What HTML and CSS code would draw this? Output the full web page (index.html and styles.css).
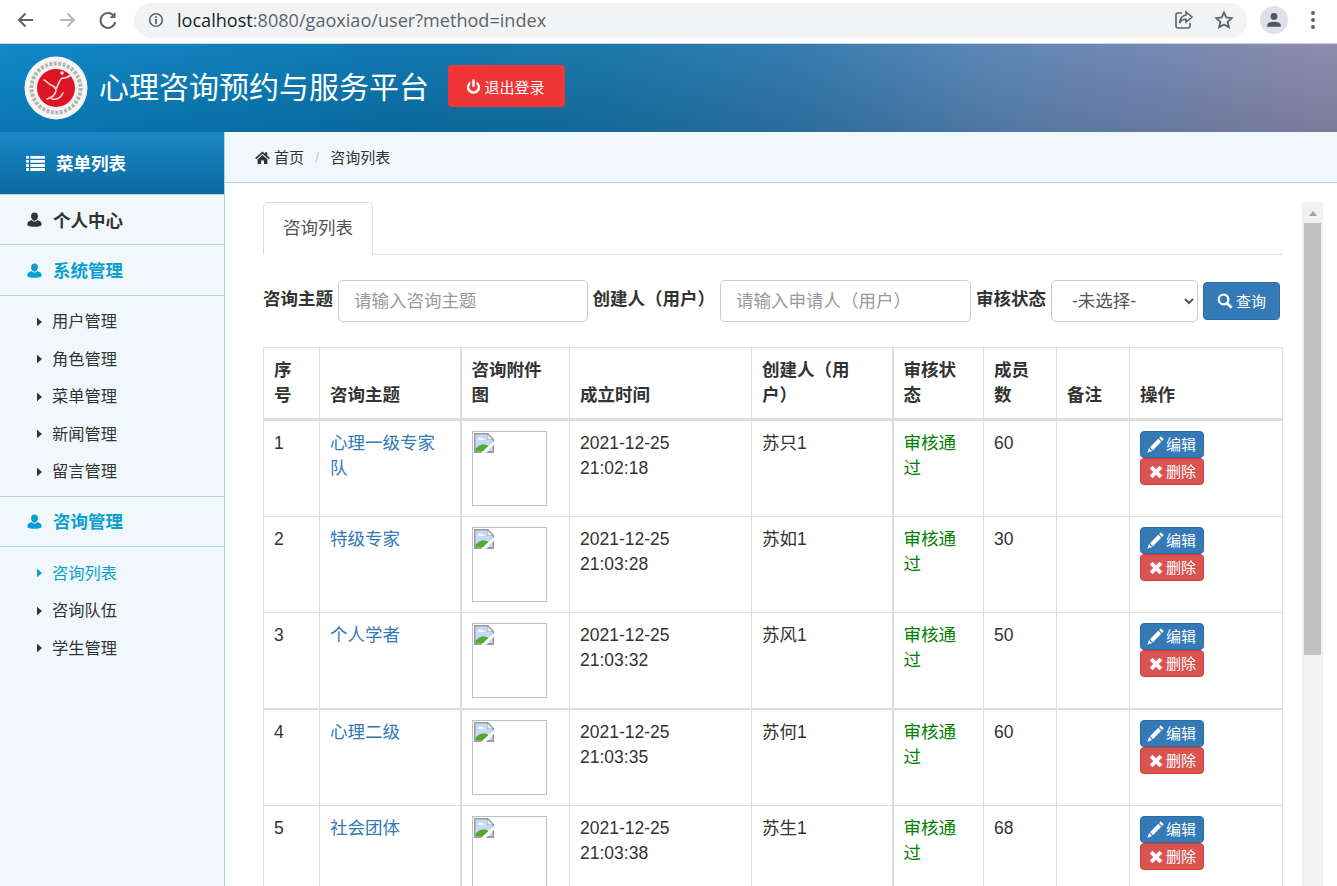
FILE: index.html
```html
<!DOCTYPE html>
<html lang="zh-CN">
<head>
<meta charset="utf-8">
<title>心理咨询预约与服务平台</title>
<link rel="stylesheet" href="styles.css">
</head>
<body>
<svg class="sprite" xmlns="http://www.w3.org/2000/svg">
  <symbol id="i-user" viewBox="0 0 16 16"><path d="M8 .5c2.300 0 3.700 1.600 3.700 3.800 0 2.400-1.500 5-3.700 5S4.300 6.700 4.300 4.300C4.300 2.100 5.700.5 8 .5zM5.200 8.400C5.900 9.400 6.900 10.100 8 10.100s2.100-.7 2.800-1.700l2.500 1.100c1.500.7 2.200 1.600 2.200 3V14c0 .9-3.800 1.600-7.500 1.600S.5 14.900.5 14v-1.500c0-1.400.7-2.300 2.200-3z"/></symbol>
  <symbol id="i-caret" viewBox="1 1 6 10"><path d="M1 1l6 5-6 5z"/></symbol>
  <symbol id="i-list" viewBox="0 0 20 16"><path d="M0 0h3v3H0zM4.500 0H20v3H4.500zM0 4.300h3v3H0zM4.500 4.300H20v3H4.500zM0 8.600h3v3H0zM4.500 8.600H20v3H4.500zM0 12.900h3v3H0zM4.500 12.900H20v3H4.500z"/></symbol>
  <symbol id="i-home" viewBox="0 0 16 16"><path d="M8 1.500l2.800 2.500V2.500h2.200v3.400L15.900 8.500 14.700 9.800 8 3.900 1.300 9.800.1 8.500zM8 5.300l5.200 4.600V15H9.600v-3.800H6.400V15H2.800V9.900z"/></symbol>
  <symbol id="i-power" viewBox="0 0 16 16"><path d="M6.700.5h2.600v8H6.700z"/><path d="M4.800 2.600v2.900a4.400 4.400 0 1 0 6.400 0V2.600a7 7 0 1 1-6.400 0z"/></symbol>
  <symbol id="i-search" viewBox="0 0 16 16"><path d="M6.500.5a6 6 0 0 1 5 9.300l4 4-1.900 1.900-4-4A6 6 0 1 1 6.500.5zm0 2.300a3.700 3.700 0 1 0 0 7.400 3.700 3.700 0 0 0 0-7.400z"/></symbol>
  <symbol id="i-pencil" viewBox="0 0 16 16"><path d="M13 .3l2.700 2.700-1.500 1.600-2.800-2.800zM10.600 2.700l2.800 2.800-7.800 7.800-2.800-2.800zM2 11.200l2.800 2.800-4.500 1.700z"/></symbol>
  <symbol id="i-remove" viewBox="0 0 16 16"><path d="M4 .8L8 4.800l4-4L15.200 4l-4 4 4 4-3.200 3.200-4-4-4 4L.8 12l4-4-4-4z"/></symbol>
  <symbol id="i-broken" viewBox="0 0 20 20">
    <path fill="#9b9b9b" d="M0 0h14l6 6v14H0z"/>
    <path fill="#c5daf6" d="M1.500 1.500h11.500v5.500h5.500v11H1.500z"/>
    <path fill="#f4f8fe" d="M4 6c.5-1.800 3-2 4-1 1.500-.2 2.500.7 2.500 2H4z"/>
    <path fill="#5aa52e" d="M1.500 18v-2c2.500-4 8-6 13-3l-4 5z"/>
    <path fill="#fff" d="M7 20L20 8v3.500L12 20z"/>
    <path fill="#eef0f2" d="M13.500 1.500l5 5h-5z"/>
  </symbol>
</svg>

<div class="browser">
  <svg class="tb-icon" viewBox="0 0 20 20"><path class="st-dark" d="M17 10H3.500M9.500 3.500L3 10l6.500 6.500"/></svg>
  <svg class="tb-icon tb-gap" viewBox="0 0 20 20"><path class="st-light" d="M3 10h13.500M10.500 3.500L17 10l-6.500 6.500"/></svg>
  <svg class="tb-icon tb-gap" viewBox="0 0 20 20"><path class="st-dark" d="M16 6.200A7.400 7.400 0 1 0 17.200 12"/><path class="fl-dark" d="M17.500 2v6h-6z"/></svg>
  <div class="omnibox">
    <svg class="om-info" viewBox="0 0 16 16"><circle class="st-thin" cx="8" cy="8" r="6.300"/><path class="fl-dark" d="M7.100 7h1.800v5H7.100zM7.100 4h1.800v1.800H7.100z"/></svg>
    <span class="url"><span class="url-host">localhost</span>:8080/gaoxiao/user?method=index</span>
    <svg class="om-share" viewBox="0 0 20 20"><path class="st-thin" d="M8 3H4a2 2 0 0 0-2 2v11a2 2 0 0 0 2 2h10a2 2 0 0 0 2-2v-3"/><path class="st-thin" d="M12 2l6 5-6 5V9.200c-3 0-5 1-6.500 3.800C6 9 8 5.700 12 5z"/></svg>
    <svg class="om-star" viewBox="0 0 20 20"><path class="st-star" d="M10 2.500l2.300 5 5.400.6-4 3.700 1.100 5.400-4.800-2.700-4.800 2.700 1.100-5.400-4-3.700 5.400-.6z"/></svg>
  </div>
  <div class="avatar"><svg viewBox="0 0 16 16"><circle cx="8" cy="4.800" r="3"/><path d="M2 14v-1.500C2 10.500 5.500 9.500 8 9.500s6 1 6 3V14z"/></svg></div>
  <div class="dots"><i></i><i></i><i></i></div>
</div>

<header class="topbar">
  <svg class="logo" viewBox="0 0 64 64">
    <circle cx="32" cy="32" r="31.500" fill="#f6f6f6"/>
    <circle cx="32" cy="32" r="24.500" fill="none" stroke="#b4b4b4" stroke-width="4" stroke-dasharray="3 1.500"/>
    <circle cx="32" cy="32" r="21" fill="#f4efef"/>
    <circle cx="32" cy="32" r="19" fill="#dd1426"/>
    <path fill="none" stroke="#f6dcdc" stroke-width="1.600" stroke-linecap="round" d="M20 24c3 1 4 4 7 5 3 1 5 3 5 6-1 4-5 7-9 8M32 33c2-3 2-7 6-11M38 22c3 1 6-1 9-3M28 43c4 1 9-1 11-6"/>
    <circle cx="38" cy="17" r="1.800" fill="#f6dcdc"/>
  </svg>
  <h1 class="site-title">心理咨询预约与服务平台</h1>
  <a class="logout"><svg class="ico ico-md"><use href="#i-power"/></svg><span class="logout-text">退出登录</span></a>
</header>

<div class="body-row">
  <aside class="sidebar">
    <div class="side-head"><svg class="ico-list"><use href="#i-list"/></svg><span class="nudge">菜单列表</span></div>
    <div class="side-group"><svg class="ico ico-lg"><use href="#i-user"/></svg><span class="nudge">个人中心</span></div>
    <div class="side-group side-group-tall is-blue"><svg class="ico ico-lg"><use href="#i-user"/></svg><span class="nudge">系统管理</span></div>
    <ul class="side-sub">
      <li><svg class="caret"><use href="#i-caret"/></svg>用户管理</li>
      <li><svg class="caret"><use href="#i-caret"/></svg>角色管理</li>
      <li><svg class="caret"><use href="#i-caret"/></svg>菜单管理</li>
      <li><svg class="caret"><use href="#i-caret"/></svg>新闻管理</li>
      <li><svg class="caret"><use href="#i-caret"/></svg>留言管理</li>
    </ul>
    <div class="side-group is-blue"><svg class="ico ico-lg"><use href="#i-user"/></svg><span class="nudge">咨询管理</span></div>
    <ul class="side-sub">
      <li class="is-active"><svg class="caret"><use href="#i-caret"/></svg>咨询列表</li>
      <li><svg class="caret"><use href="#i-caret"/></svg>咨询队伍</li>
      <li><svg class="caret"><use href="#i-caret"/></svg>学生管理</li>
    </ul>
  </aside>

  <main class="main">
    <nav class="crumb">
      <svg class="ico ico-sm"><use href="#i-home"/></svg><span>首页</span><span class="crumb-sep">/</span><span>咨询列表</span>
    </nav>
    <div class="content">
      <section class="panel">
        <div class="tabs"><div class="tab">咨询列表</div></div>
        <form class="filters">
          <label class="f-label">咨询主题</label>
          <input class="f-input f-w1" placeholder="请输入咨询主题">
          <label class="f-label">创建人（用户）</label>
          <input class="f-input f-w2" placeholder="请输入申请人（用户）">
          <label class="f-label">审核状态</label>
          <select class="f-select"><option>-未选择-</option></select>
          <button type="button" class="btn-search"><svg class="ico ico-search"><use href="#i-search"/></svg>查询</button>
        </form>
        <table class="grid">
          <colgroup>
            <col class="c1"><col class="c2"><col class="c3"><col class="c4"><col class="c5"><col class="c6"><col class="c7"><col class="c8"><col class="c9">
          </colgroup>
          <thead>
            <tr>
              <th>序<br>号</th><th class="thick-r">咨询主题</th><th>咨询附件<br>图</th><th>成立时间</th><th class="thick-r">创建人（用<br>户）</th><th>审核状<br>态</th><th>成员<br>数</th><th>备注</th><th>操作</th>
            </tr>
          </thead>
          <tbody>
            <tr>
              <td>1</td><td class="thick-r"><a class="link">心理一级专家<br>队</a></td><td><div class="broken"><svg class="broken-ico"><use href="#i-broken"/></svg></div></td><td>2021-12-25<br>21:02:18</td><td class="thick-r">苏只1</td><td class="ok">审核通<br>过</td><td>60</td><td></td>
              <td><div class="ops"><a class="op op-edit"><svg class="ico ico-op"><use href="#i-pencil"/></svg>编辑</a><a class="op op-del"><svg class="ico ico-x"><use href="#i-remove"/></svg>删除</a></div></td>
            </tr>
            <tr>
              <td>2</td><td class="thick-r"><a class="link">特级专家</a></td><td><div class="broken"><svg class="broken-ico"><use href="#i-broken"/></svg></div></td><td>2021-12-25<br>21:03:28</td><td class="thick-r">苏如1</td><td class="ok">审核通<br>过</td><td>30</td><td></td>
              <td><div class="ops"><a class="op op-edit"><svg class="ico ico-op"><use href="#i-pencil"/></svg>编辑</a><a class="op op-del"><svg class="ico ico-x"><use href="#i-remove"/></svg>删除</a></div></td>
            </tr>
            <tr class="thick-b">
              <td>3</td><td class="thick-r"><a class="link">个人学者</a></td><td><div class="broken"><svg class="broken-ico"><use href="#i-broken"/></svg></div></td><td>2021-12-25<br>21:03:32</td><td class="thick-r">苏风1</td><td class="ok">审核通<br>过</td><td>50</td><td></td>
              <td><div class="ops"><a class="op op-edit"><svg class="ico ico-op"><use href="#i-pencil"/></svg>编辑</a><a class="op op-del"><svg class="ico ico-x"><use href="#i-remove"/></svg>删除</a></div></td>
            </tr>
            <tr>
              <td>4</td><td class="thick-r"><a class="link">心理二级</a></td><td><div class="broken"><svg class="broken-ico"><use href="#i-broken"/></svg></div></td><td>2021-12-25<br>21:03:35</td><td class="thick-r">苏何1</td><td class="ok">审核通<br>过</td><td>60</td><td></td>
              <td><div class="ops"><a class="op op-edit"><svg class="ico ico-op"><use href="#i-pencil"/></svg>编辑</a><a class="op op-del"><svg class="ico ico-x"><use href="#i-remove"/></svg>删除</a></div></td>
            </tr>
            <tr>
              <td>5</td><td class="thick-r"><a class="link">社会团体</a></td><td><div class="broken"><svg class="broken-ico"><use href="#i-broken"/></svg></div></td><td>2021-12-25<br>21:03:38</td><td class="thick-r">苏生1</td><td class="ok">审核通<br>过</td><td>68</td><td></td>
              <td><div class="ops"><a class="op op-edit"><svg class="ico ico-op"><use href="#i-pencil"/></svg>编辑</a><a class="op op-del"><svg class="ico ico-x"><use href="#i-remove"/></svg>删除</a></div></td>
            </tr>
          </tbody>
        </table>
      </section>
      <div class="scrollbar">
        <div class="sb-arrow"></div>
        <div class="sb-thumb"></div>
      </div>
    </div>
  </main>
</div>
</body>
</html>
```
FILE: styles.css
```css
* { box-sizing: border-box; }
html, body { margin: 0; height: 886px; overflow: hidden; }
body {
  background: #fff;
  color: #333;
  font-family: "Liberation Sans", "Noto Sans CJK SC", sans-serif;
  font-size: 17.5px;
  line-height: 25px;
}
.sprite { display: none; }
svg { fill: currentColor; }

/* browser toolbar */
.browser {
  height: 44px;
  display: flex;
  align-items: center;
  padding: 0 0 3px 16px;
  background: #fff;
  border-bottom: 1px solid #d3d6da;
}
.tb-icon { width: 20px; height: 20px; flex: none; }
.tb-gap { margin-left: 21px; }
.st-dark, .st-light, .st-thin, .st-star { fill: none; stroke-width: 2; }
.st-dark { stroke: #5f6368; }
.st-light { stroke: #b4b6b9; }
.st-thin { stroke: #5f6368; stroke-width: 1.6; }
.st-star { stroke: #5f6368; stroke-width: 1.8; }
.fl-dark { fill: #5f6368; }
.omnibox {
  margin-left: 16px;
  width: 1113px;
  height: 35px;
  display: flex;
  align-items: center;
  padding: 0 13px 0 14px;
  background: #f1f3f4;
  border-radius: 18px;
}
.om-info { width: 16px; height: 16px; flex: none; }
.url {
  margin-left: 13px;
  flex: 1;
  color: #5f6368;
  font-family: "Open Sans", sans-serif;
  font-size: 18.100px;
  white-space: nowrap;
}
.url-host { color: #202124; }
.om-share { width: 20px; height: 20px; flex: none; }
.om-star { width: 20px; height: 20px; margin-left: 20px; flex: none; }
.avatar {
  margin-left: 13px;
  width: 28px;
  height: 28px;
  padding: 5px;
  flex: none;
  border-radius: 50%;
  background: #dee1e6;
  color: #4a5568;
}
.avatar svg { display: block; width: 18px; height: 18px; }
.dots {
  margin-left: 23px;
  display: flex;
  flex-direction: column;
  gap: 3px;
}
.dots i { display: block; width: 4px; height: 4px; border-radius: 50%; background: #5f6368; }

/* top banner */
.topbar {
  height: 88px;
  display: flex;
  align-items: center;
  padding-left: 24px;
  color: #fff;
  background:
    linear-gradient(180deg, rgba(255,255,255,.03), rgba(0,0,0,.1)),
    linear-gradient(90deg, #0a84c6 0%, #0a74ad 30%, #1674a8 45%, #3078ae 60%, #5a84b4 75%, #8c88ac 100%);
}
.logo { width: 64px; height: 64px; flex: none; filter: blur(.5px); }
.site-title {
  margin: 0 0 0 11px;
  font-size: 30px;
  line-height: 42px;
  font-weight: 400;
}
.logout {
  margin: 0 0 4px 19px;
  width: 117px;
  height: 42px;
  display: flex;
  align-items: center;
  justify-content: center;
  padding-right: 2px;
  background: #f03535;
  border-radius: 4px;
  font-size: 15px;
  color: #fff;
}
.logout-text { padding-top: 2px; }

/* icons */
.ico { flex: none; }
.ico-md { width: 15px; height: 15px; margin-right: 3px; }
.ico-lg { width: 15px; height: 15px; margin: 0 11px 0 1px; }
.ico-sm { width: 15px; height: 15px; margin-right: 4px; }
.ico-search { width: 16px; height: 16px; margin-right: 3px; }
.ico-op { width: 17px; height: 17px; margin-right: 2px; }
.ico-x { width: 14px; height: 14px; margin: 0 3px 0 2px; }
.ico-list { width: 19px; height: 15px; margin-right: 11px; flex: none; }
.caret { width: 5px; height: 10px; margin-right: 10px; flex: none; color: #333; }
.nudge { padding-top: 3px; }

/* body */
.body-row { display: flex; height: 754px; }
.sidebar {
  width: 225px;
  flex: none;
  background: #f0f8fc;
  border-right: 1px solid #b5d4e0;
}
.side-head {
  height: 63px;
  display: flex;
  align-items: center;
  padding-left: 26px;
  color: #fff;
  font-weight: 700;
  background: linear-gradient(180deg, #1a87c6, #0a6aa0);
  border-bottom: 1px solid #b5d4e0;
}
.side-group {
  height: 50px;
  display: flex;
  align-items: center;
  padding-left: 26px;
  font-weight: 700;
  border-bottom: 1px solid #b5d4e0;
}
.side-group-tall { height: 51px; }
.is-blue { color: #0a9fd0; }
.side-sub {
  list-style: none;
  margin: 0;
  padding: 7px 0 6px 37px;
  font-size: 16.250px;
  border-bottom: 1px solid #b5d4e0;
}
.side-group-tall + .side-sub { padding-top: 6px; }
.side-sub:last-child { border-bottom: 0; }
.side-sub li { height: 37.500px; display: flex; align-items: center; padding-top: 2px; }
.side-sub .is-active, .side-sub .is-active .caret { color: #0a9fd0; }

/* main */
.main { flex: 1; min-width: 0; display: flex; flex-direction: column; }
.crumb {
  height: 51px;
  flex: none;
  display: flex;
  align-items: center;
  padding-left: 30px;
  font-size: 15px;
  background: #f0f8fc;
  border-bottom: 1px solid #b5d4e0;
}
.crumb-sep { margin: 0 11px; color: #ccc; }
.content {
  flex: 1;
  min-height: 0;
  display: flex;
  gap: 19px;
  padding: 19px 14px 0 38px;
}
.panel { width: 1020px; flex: none; }
.tabs { height: 53px; border-bottom: 1px solid #ddd; }
.tab {
  width: 110px;
  height: 53px;
  padding-top: 13px;
  text-align: center;
  color: #555;
  background: #fff;
  border: 1px solid #ddd;
  border-bottom-color: #fff;
  border-radius: 5px 5px 0 0;
}
.filters {
  margin-top: 25px;
  height: 42px;
  display: flex;
  align-items: center;
  gap: 5px;
}
.f-label { font-weight: 700; margin-bottom: 3px; white-space: nowrap; }
.f-input, .f-select {
  height: 42px;
  background: #fff;
  border: 1px solid #ccc;
  border-radius: 5px;
  font: inherit;
  color: #555;
}
.f-input { padding: 0 15px; }
.f-input::placeholder { color: #999; opacity: 1; }
.f-w1 { width: 249.500px; }
.f-w2 { width: 251px; }
.f-select { width: 147px; padding: 0 16px; }
.btn-search {
  width: 77px;
  height: 38px;
  display: flex;
  align-items: center;
  justify-content: center;
  padding: 0;
  color: #fff;
  background: #337ab7;
  border: 1px solid #2e6da4;
  border-radius: 4px;
  font: inherit;
  font-size: 15px;
}

/* table */
.grid {
  margin-top: 25px;
  width: 1019px;
  table-layout: fixed;
  border-collapse: collapse;
}
.c1 { width: 56px; } .c2 { width: 141px; } .c3 { width: 109px; }
.c4 { width: 182px; } .c5 { width: 141px; } .c6 { width: 91px; }
.c7 { width: 73px; } .c8 { width: 73px; } .c9 { width: 153px; }
.grid th, .grid td {
  padding: 10px;
  border: 1px solid #ddd;
  text-align: left;
}
.grid th {
  vertical-align: bottom;
  border-bottom: 3px solid #ddd;
  font-weight: 700;
}
.grid td { vertical-align: top; }
.grid .thick-r { border-right-width: 2px; }
.thick-b td { border-bottom-width: 2px; }
.link { color: #337ab7; }
.ok { color: #008000; }
.broken {
  width: 75px;
  height: 75px;
  border: 1px solid #c0c0c0;
  padding: 1px;
}
.broken-ico { display: block; width: 20px; height: 20px; }
.ops { display: flex; flex-direction: column; align-items: flex-start; }
.op {
  width: 64px;
  height: 27px;
  display: flex;
  align-items: center;
  padding-left: 6px;
  color: #fff;
  font-size: 15px;
  border-radius: 4px;
  border: 1px solid transparent;
}
.op-edit { background: #337ab7; border-color: #2e6da4; }
.op-del { background: #d9534f; border-color: #d43f3a; }

/* scrollbar */
.scrollbar {
  width: 21px;
  flex: none;
  display: flex;
  flex-direction: column;
  align-items: center;
  background: #f1f1f1;
  padding: 0 2px;
}
.sb-arrow {
  margin-top: 9px;
  border-left: 4.500px solid transparent;
  border-right: 4.500px solid transparent;
  border-bottom: 5px solid #a3a3a3;
}
.sb-thumb { margin-top: 7px; width: 17px; height: 432px; background: #c1c1c1; }
```
